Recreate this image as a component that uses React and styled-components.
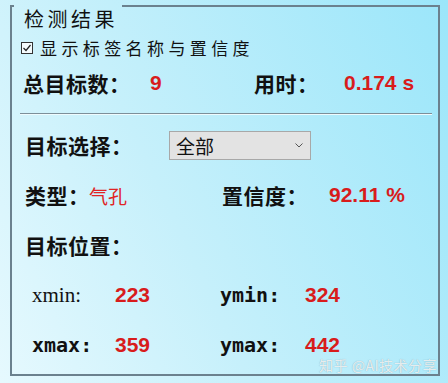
import React from "react";
import styled, { createGlobalStyle } from "styled-components";

const GlobalStyle = createGlobalStyle`
  html, body {
    margin: 0;
    padding: 0;
  }
  body {
    font-family: "Noto Sans CJK SC", sans-serif;
    color: #111;
  }
`;

const Page = styled.div`
  position: relative;
  box-sizing: border-box;
  width: 448px;
  height: 383px;
  padding: 5px 8px 7px 10px;
  background: linear-gradient(65deg, #e6f9fe 0%, #c6f0fb 40%, #9be6fa 100%);
  overflow: hidden;
`;

const Frame = styled.div`
  box-sizing: border-box;
  height: 100%;
  border: 2px solid #6b818e;
  border-top: none;
  display: flex;
  flex-direction: column;
`;

const Header = styled.div`
  display: flex;
  height: 28px;
`;

const HeaderLine = styled.div`
  flex: ${(props) => (props.$grow ? 1 : "none")};
  width: ${(props) => props.$w || 0}px;
  border-top: 2px solid #6b818e;
`;

const Legend = styled.div`
  padding: 0 4px 0 10px;
  font-size: 20px;
  line-height: 28px;
  letter-spacing: 3.5px;
  font-weight: 400;
`;

const CheckRow = styled.div`
  display: flex;
  align-items: center;
  height: 29px;
  padding-left: 9px;
  gap: 7px;
`;

const CheckText = styled.span`
  font-size: 17px;
  letter-spacing: 4.4px;
`;

const Row = styled.div`
  display: flex;
  align-items: center;
  height: ${(props) => props.$h || 30}px;
  margin-top: ${(props) => props.$mt || 0}px;
  padding-left: ${(props) => props.$pl}px;
`;

const Cell = styled.div`
  flex: none;
  width: ${(props) => props.$w}px;
  display: flex;
  align-items: center;
`;

const Label = styled.span`
  font-size: 21px;
  font-weight: 700;
  letter-spacing: 0.5px;
  white-space: nowrap;
`;

const Value = styled.span`
  font-family: "Liberation Sans", Arial, sans-serif;
  font-size: 21px;
  font-weight: 700;
  color: #d81c1c;
  white-space: nowrap;
`;

const TypeValue = styled.span`
  font-size: 19px;
  color: #e02424;
`;

const SerifLabel = styled.span`
  font-family: "Liberation Serif", serif;
  font-size: 21px;
`;

const MonoLabel = styled.span`
  font-family: "DejaVu Sans Mono", monospace;
  font-size: 20px;
  font-weight: 700;
`;

const Divider = styled.div`
  margin: 9px 6px 0 8px;
  border-top: 1px solid #7d8f99;
  border-bottom: 1px solid #eefbfe;
`;

const Select = styled.div`
  box-sizing: border-box;
  width: 142px;
  height: 29px;
  display: flex;
  align-items: center;
  justify-content: space-between;
  padding: 0 7px 0 6px;
  background: #e3e3e3;
  border: 1px solid #a8a8a8;
  font-size: 19px;
`;

const Watermark = styled.div`
  position: absolute;
  right: 11px;
  bottom: 10px;
  font-size: 14px;
  line-height: 16px;
  color: rgba(255, 255, 255, 0.8);
  text-shadow: 0 0 1px rgba(90, 110, 120, 0.6);
  letter-spacing: 0.5px;
`;

const CheckBox = () => (
  <svg width="12" height="12" viewBox="0 0 12 12">
    <rect x="0.5" y="0.5" width="11" height="11" fill="#f4fbfd" stroke="#333" />
    <polyline points="2.5,6 5,8.5 9.5,3" fill="none" stroke="#222" strokeWidth="1.2" />
  </svg>
);

const Chevron = () => (
  <svg width="8" height="5" viewBox="0 0 8 5">
    <polyline points="0.5,0.5 4,4 7.5,0.5" fill="none" stroke="#555" strokeWidth="1" />
  </svg>
);

const App = () => {
  return (
    <Page>
      <GlobalStyle />
      <Frame>
        <Header>
          <HeaderLine $w={2} />
          <Legend>检测结果</Legend>
          <HeaderLine $grow />
        </Header>
        <CheckRow>
          <CheckBox />
          <CheckText>显示标签名称与置信度</CheckText>
        </CheckRow>
        <Row $h={42} $pl={11}>
          <Cell $w={127}>
            <Label>总目标数：</Label>
          </Cell>
          <Cell $w={104}>
            <Value>9</Value>
          </Cell>
          <Cell $w={90}>
            <Label>用时：</Label>
          </Cell>
          <Value>0.174 s</Value>
        </Row>
        <Divider />
        <Row $mt={15} $pl={13}>
          <Cell $w={144}>
            <Label>目标选择：</Label>
          </Cell>
          <Select>
            <span>全部</span>
            <Chevron />
          </Select>
        </Row>
        <Row $mt={20} $pl={13}>
          <Cell $w={64}>
            <Label>类型：</Label>
          </Cell>
          <Cell $w={133}>
            <TypeValue>气孔</TypeValue>
          </Cell>
          <Cell $w={107}>
            <Label>置信度：</Label>
          </Cell>
          <Value>92.11 %</Value>
        </Row>
        <Row $mt={20} $pl={13}>
          <Label>目标位置：</Label>
        </Row>
        <Row $mt={20} $pl={20}>
          <Cell $w={83}>
            <SerifLabel>xmin:</SerifLabel>
          </Cell>
          <Cell $w={105}>
            <Value>223</Value>
          </Cell>
          <Cell $w={85}>
            <MonoLabel>ymin:</MonoLabel>
          </Cell>
          <Value>324</Value>
        </Row>
        <Row $mt={20} $pl={20}>
          <Cell $w={83}>
            <MonoLabel>xmax:</MonoLabel>
          </Cell>
          <Cell $w={105}>
            <Value>359</Value>
          </Cell>
          <Cell $w={85}>
            <MonoLabel>ymax:</MonoLabel>
          </Cell>
          <Value>442</Value>
        </Row>
      </Frame>
      <Watermark>知乎 @AI技术分享</Watermark>
    </Page>
  );
};

export default App;
